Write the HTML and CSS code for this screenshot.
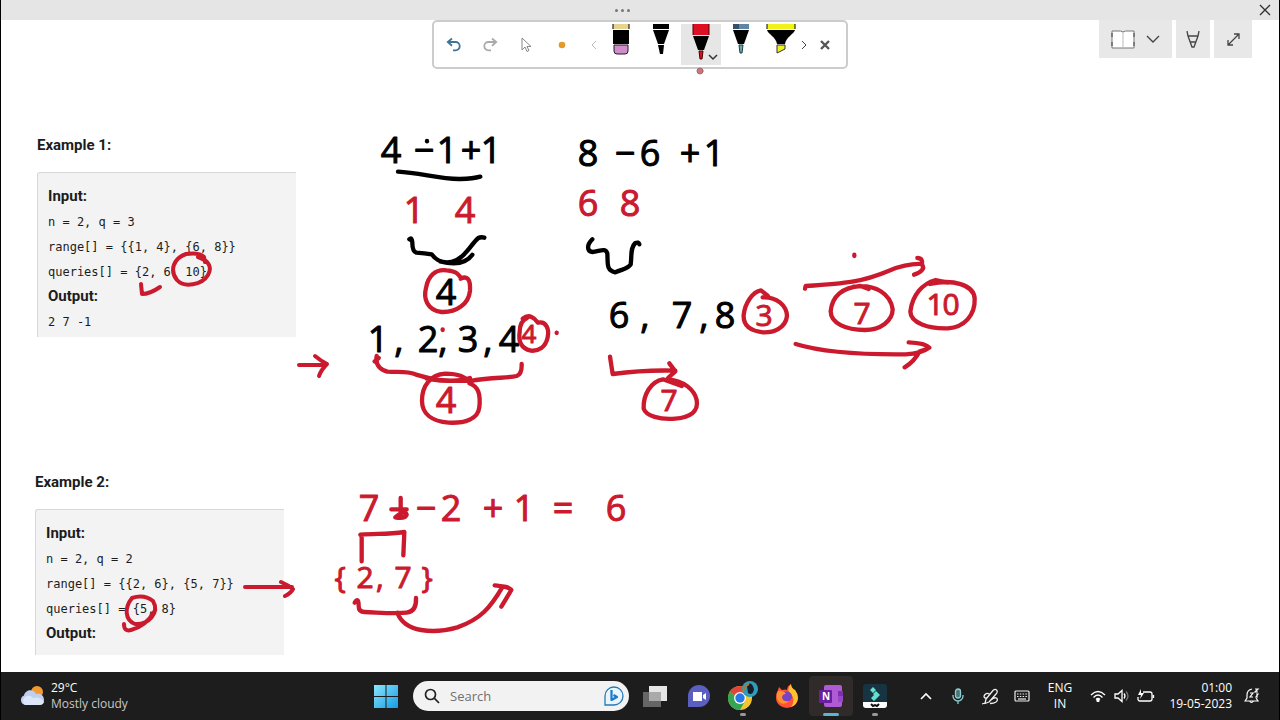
FILE: index.html
```html
<!DOCTYPE html>
<html lang="en">
<head>
<meta charset="utf-8">
<title>Range queries notes</title>
<link rel="stylesheet" href="styles.css">
</head>
<body>
<div class="page">
  <header class="titlebar">
    <span class="grip"><i></i><i></i><i></i></span>
    <button class="close" aria-label="Close window"><svg width="12" height="12" viewBox="0 0 12 12"><path d="M1 1l10 10M11 1L1 11" stroke="#333" stroke-width="1.4"/></svg></button>
  </header>

  <main class="canvas">
    <div class="tools">
      <div class="pens" role="toolbar" aria-label="Pens">
        <button class="tool" aria-label="Undo"><svg width="16" height="16" viewBox="0 0 16 16" fill="none" stroke="#3f7397" stroke-width="1.8"><path d="M6 1.500L1.800 5 6 8.700M2 5h7.500a4.200 4.200 0 0 1 0 8.400H7"/></svg></button>
        <button class="tool" aria-label="Redo"><svg width="16" height="16" viewBox="0 0 16 16" fill="none" stroke="#aaa" stroke-width="1.800"><path d="M10 1.500L14.200 5 10 8.700M14 5H6.500a4.200 4.200 0 0 0 0 8.400H9"/></svg></button>
        <button class="tool" aria-label="Select"><svg width="12" height="16" viewBox="0 0 12 16" fill="#fff" stroke="#888" stroke-width="1"><path d="M2 1v12l3-3 2 4.500 2-1L7 9.500h4z"/></svg></button>
        <button class="tool" aria-label="Laser pointer"><svg width="8" height="8" viewBox="0 0 8 8"><circle cx="4" cy="4" r="3.300" fill="#e39a2b"/></svg></button>
        <button class="tool previous" aria-label="Previous pens"><svg width="6" height="10" viewBox="0 0 6 10" fill="none" stroke="#bbb"><path d="M5 1L1 5l4 4"/></svg></button>
        <button class="pen" aria-label="Eraser"><svg width="18" height="32" viewBox="0 0 18 32"><path d="M1 0h16v5H1z" fill="#e5d48f"/><path d="M1 0v5M17 0v5" stroke="#000"/><path d="M1 6h16v14H1z"/><path d="M2 21h14v6q0 3-3 3H5q-3 0-3-3z" fill="#cf8dcc" stroke="#221a22"/></svg></button>
        <button class="pen" aria-label="Black pen"><svg width="18" height="32" viewBox="0 0 18 32"><path d="M1 0h16v5H1zM1 6h16l-5 14H6zM6 21h6l-1 9H8z"/></svg></button>
        <button class="pen active" aria-label="Red pen" aria-pressed="true"><svg width="18" height="38" viewBox="0 0 18 38"><path d="M1 0h16v11H1z" fill="#dc1022"/><path d="M1 0v11M17 0v11" stroke="#500"/><path d="M1 12h16l-5 14H6z"/><path d="M7 27h4l-1 8H8z" fill="#dc1022" stroke="#400"/></svg><svg class="more" width="10" height="7" viewBox="0 0 10 7" fill="none" stroke="#333" stroke-width="1.500"><path d="M1 1l4 4 4-4"/></svg></button>
        <button class="pen" aria-label="Galaxy pen"><svg width="18" height="32" viewBox="0 0 18 32"><path d="M1 0h16v5H1z" fill="#5f86a3"/><path d="M1 0h6v5H1z" fill="#36506c"/><path d="M1 6h16l-5 14H6z"/><path d="M7 21h4l-1 8H8z" fill="#65aeb0" stroke="#213d42"/></svg></button>
        <button class="pen" aria-label="Yellow highlighter"><svg width="30" height="32" viewBox="0 0 30 32"><path d="M1 0h28v5H1z" fill="#f1f21a"/><path d="M1 0v5M29 0v5" stroke="#000"/><path d="M1 6h28c-1 4-9 7-10 14h-8C10 13 2 10 1 6z"/><path d="M11 21h8v4l-8 4z" fill="#f1f21a" stroke="#333"/></svg></button>
        <button class="tool next" aria-label="More pens"><svg width="6" height="10" viewBox="0 0 6 10" fill="none" stroke="#444"><path d="M1 1l4 4-4 4"/></svg></button>
        <button class="tool" aria-label="Close pens"><svg width="10" height="10" viewBox="0 0 10 10" stroke="#555" stroke-width="2.400"><path d="M1 1l8 8M9 1L1 9"/></svg></button>
      </div>
      <div class="views">
        <button class="view book" aria-label="Page view"><svg width="24" height="19" viewBox="0 0 24 19" fill="#fff" stroke="#777"><path d="M1 1h8.500l2.500 1 2.500-1H23v17H1z"/><path d="M12 2v16" stroke="#bbb"/><path d="M1 3v13M23 3v13" stroke="#444" stroke-dasharray="4 5"/></svg><svg width="14" height="8" viewBox="0 0 14 8" fill="none" stroke="#444" stroke-width="1.400"><path d="M1 1l6 6 6-6"/></svg></button>
        <button class="view" aria-label="Draw"><svg width="14" height="17" viewBox="0 0 14 17" fill="none" stroke="#444" stroke-width="1.300"><path d="M1 0l1 5 4 11h2l4-11 1-5M2 5h10M4.500 11h5"/></svg></button>
        <button class="view expand" aria-label="Full screen"><svg width="13" height="13" viewBox="0 0 13 13" fill="none" stroke="#444" stroke-width="1.300"><path d="M1 12L12 1M7 1h5v5M1 7v5h5"/></svg></button>
      </div>
    </div>

    <section class="example first">
      <h2>Example 1:</h2>
      <div class="sample"><b>Input:</b><br>n = 2, q = 3<br>range[] = {{1, 4}, {6, 8}}<br>queries[] = {2, 6, 10}<br><b>Output:</b><br>2 7 -1</div>
    </section>
    <section class="example second">
      <h2>Example 2:</h2>
      <div class="sample"><b>Input:</b><br>n = 2, q = 2<br>range[] = {{2, 6}, {5, 7}}<br>queries[] = {5, 8}<br><b>Output:</b></div>
    </section>
  </main>

  <svg class="ink" width="1280" height="672" viewBox="0 0 1280 672">
    <g class="black">
      <text class="l" x="391 424 447 471 491" y="163">4−1+1</text>
      <text class="l" x="588 625 650 690 714" y="166">8−6+1</text>
      <text class="l" x="446" y="305">4</text>
      <text class="l" x="378 399 428 443 468 488 509" y="352">1,2,3,4</text>
      <text class="l" x="619 645 682 704 725" y="328">6,7,8</text>
    </g>
    <g class="red">
      <text class="l" x="414 465" y="223">14</text>
      <text class="l" x="588 630" y="216">68</text>
      <text class="s" x="529" y="343">4</text>
      <text class="l" x="446" y="413">4</text>
      <text class="m" x="669" y="411">7</text>
      <text class="m" x="764" y="326">3</text>
      <text class="m" x="862" y="324">7</text>
      <text class="m" x="935 951" y="315">10</text>
      <text class="l" x="369 426 451 493 524 563 616" y="521">7−2+1=6</text>
      <text class="m" x="340 365 380 403 427" y="588">{2,7}</text>
    </g>
    <!-- lines, brackets and rings round the first range -->
    <svg x="340" y="120" width="220" height="310" viewBox="0 0 660 930">
      <g class="black stroke">
        <path d="M174 155C240 158 300 178 360 177Q400 176 421 170"/>
        <path d="M208 358q8-8 9 10 0 26 12 30 26 2 46 5c16 22 40 26 58 23 40-8 60-54 82-72q8-4 18-1M300 424q70 18 97-20"/>
        <path d="M261 63v1"/>
      </g>
      <g class="red stroke">
        <path d="M362 476c20-10 30 2 28 36-4 40-40 66-86 64-44-6-54-42-46-72 6-36 28-58 62-53 32 2 36 14 44 24"/>
        <path d="M548 596c20-16 36-2 46 12 26-6 34 22 29 44-6 30-28 42-50 40-32-6-38-32-34-56 0-22 8-36 22-42"/>
        <path d="M110 708c-4 24 8 40 32 47 40 2 60-2 84 8 60 18 80 22 170 19 60-10 110-8 134-14q16-6 15-36M104 724l12-10"/>
        <path d="M388 790c28 10 34 34 30 72-4 36-44 48-92 46-52-4-80-28-80-66 0-46 26-78 70-81 40 0 60 10 78 28M260 776q80 14 130-2"/>
        <path d="M308 628v2M650 638v1"/>
      </g>
    </svg>
    <!-- brackets and arrow of the second range -->
    <svg x="560" y="120" width="200" height="310" viewBox="0 0 600 930">
      <path class="black stroke" d="M97 358c-18 18-16 36 0 38 22-2 40-14 45 4 2 32-4 50 24 57 22-10 38-10 46-24 4-26-2-50 14-64q10-4 12 4"/>
      <g class="red stroke">
        <path d="M150 710l8 52c60-8 120-12 188-10M328 730l18 24-22 20"/>
        <path d="M322 778c50 2 82 34 88 62 6 34-18 52-64 56-46 4-88-8-95-30-2-42 22-82 58-88l56 20"/>
      </g>
    </svg>
    <!-- rings and long arrows on the right -->
    <svg x="740" y="230" width="260" height="160" viewBox="0 0 780 480">
      <g class="red stroke">
        <path d="M68 202c44-2 72 26 73 56-4 36-40 50-72 49-34-4-60-18-58-52 4-38 28-70 52-74l20 16"/>
        <path d="M195 176l2-8c120-8 170-12 250-46q54-22 98-20M532 84q18 0 14 20c10 12-4 24-24 30"/>
        <path d="M340 170c68-10 112 24 118 68 0 34-36 62-84 62-56 0-102-20-102-56 4-46 36-72 90-76l24 9"/>
        <path d="M570 162c68-16 132 2 134 44 2 50-32 86-80 89-58 2-112-16-113-50 6-50 36-84 76-95l36 8"/>
        <path d="M167 342c90 28 230 32 330 31 36-2 54-8 70-20M506 337q50 2 62 16-12 6-30 12-14 28-44 47M343 74v4"/>
      </g>
    </svg>
    <!-- marks over the second example's working -->
    <svg x="320" y="470" width="330" height="180" viewBox="0 0 990 540">
      <g class="red stroke">
        <path d="M125 274V198l-4-4c50-4 80 0 132-8l-3 70"/>
        <path d="M104 398q12-18 12 10 0 18 18 18c50 2 90 6 126 2q30-4 28-44"/>
        <path d="M232 428c22 60 110 64 180 44 70-24 100-60 136-122M524 346c26 4 40 2 50 14l-30 50"/>
        <path d="M214 118h46M242 84v58M226 142q28-24 34-8-6 14-34 8z"/>
      </g>
    </svg>
    <g class="red thin">
      <path d="M141 284l1 10q8 0 18-7"/>
      <path d="M198 257c12 4 14 11 10 18-6 10-24 13-31 5-8-10-3-22 9-26q13-2 18 3l1 5"/>
      <path d="M299 365h24M315 356q6 5 12 8-6 6-8 12"/>
      <path d="M245 587h47M281 582q7 3 12 7-2 4-8 7"/>
      <path d="M132 598q12-4 21 3c7 12-5 24-18 23-10-4-11-16-3-26M124 624q0 8 7 6 15-4 23-18"/>
      <circle class="nib" cx="700" cy="71" r="3"/>
    </g>
  </svg>

  <footer class="taskbar">
    <div class="weather">
      <svg width="26" height="22" viewBox="0 0 26 22"><circle cx="18" cy="7" r="6" fill="#f29a30"/><path d="M6 20a5 5 0 0 1-1-9.500C6 5 14 3 17 9c5-1 8 2 8 6q0 5-5 5z" fill="#bfd0ef"/><path d="M6 20a5 5 0 0 1 0-8q5-3 8 1 7-2 11 4-1 3-5 3z" fill="#dbe6fa"/></svg>
      <div><div class="temp">29°C</div><div class="sky">Mostly cloudy</div></div>
    </div>
    <div class="apps">
      <button class="start" aria-label="Start"><svg width="24" height="24" viewBox="0 0 24 24"><defs><linearGradient id="win" x2="1" y2="1"><stop stop-color="#8be6fb"/><stop offset="1" stop-color="#149be5"/></linearGradient></defs><path d="M0 1h11.500v11H0zM12.500 1H24v11H12.500zM0 13h11.500v11H0zM12.500 13H24v11H12.500z" fill="url(#win)"/></svg></button>
      <label class="search">
        <svg width="16" height="16" viewBox="0 0 16 16" fill="none" stroke="#222" stroke-width="1.700"><circle cx="6.500" cy="6.500" r="5"/><path d="M10.200 10.200L15 15"/></svg>
        <input type="text" placeholder="Search" aria-label="Search">
        <svg width="22" height="22" viewBox="0 0 22 22" fill="none"><path d="M2 20V11a9 9 0 1 1 9 9z" fill="#e9f5fb" stroke="#2479b5" stroke-width="1.300"/><path d="M8.500 5v10l5.500-3-3.500-2" stroke="#1c78c8" stroke-width="2.200" stroke-linejoin="round"/></svg>
      </label>
      <button class="app" aria-label="Task view"><svg width="26" height="24" viewBox="0 0 26 24"><path d="M1 8h18v15H1z" fill="#666"/><path d="M7 2h18v15H7z" fill="#e6e6e6"/><path d="M7 8h12v9H7z" fill="#aaa"/></svg></button>
      <button class="app" aria-label="Chat"><svg width="24" height="24" viewBox="0 0 24 24"><path d="M1 23V12a11 11 0 1 1 11 11z" fill="#5a5fc0"/><path d="M6 8h9v9H6zM16 11l3-2v7l-3-2z" fill="#fff"/></svg></button>
      <button class="app running" aria-label="Chrome"><svg width="32" height="30" viewBox="0 0 32 30"><circle cx="13" cy="17" r="12" fill="#f4c52e"/><path d="M13 17L2.600 11A12 12 0 0 1 23.400 11z" fill="#df453b"/><path d="M13 17L2.600 11A12 12 0 0 0 13 29l5-9z" fill="#35a454"/><circle cx="13" cy="17" r="6" fill="#fff"/><circle cx="13" cy="17" r="4.700" fill="#2878e5"/><circle cx="23" cy="8" r="8" fill="#2e9dbb"/><path d="M20 5q4-6 7 3-1 7-6 4z" fill="#151e2c"/><path d="M15 11q4-7 7-8" stroke="#b2792e" stroke-width="2" fill="none"/></svg></button>
      <button class="app" aria-label="Firefox"><svg width="24" height="24" viewBox="0 0 24 24"><path d="M3 6l1-3 3 3q3-1 5 0 0-4 4-6 0 4 4 6 3 4 3 8a11 10 0 0 1-22 0Q1 9 3 6z" fill="#ff5134"/><path d="M16 0q0 4 4 6 3 4 3 8-1 7-7 9 5-7 0-13-5-4 0-10z" fill="#ffc32e"/><circle cx="12" cy="12.500" r="5" fill="#7844c5"/><path d="M3 7q5-1 8 3-4 0-4 4 1 4 7 3-5 5-10 1-4-5-1-11z" fill="#ff9230"/></svg></button>
      <button class="app current" aria-label="OneNote"><svg width="26" height="24" viewBox="0 0 26 24"><rect x="6" y="1" width="18" height="22" rx="2" fill="#b05bd6"/><path d="M20 7h5v5h-5z" fill="#7c2fae"/><path d="M20 12h5v6h-5z" fill="#9a44c8"/><rect x="1" y="6" width="13" height="13" rx="1" fill="#6b1fa0"/><text class="badge" x="4" y="16">N</text></svg></button>
      <button class="app running" aria-label="Filmora"><svg width="24" height="24" viewBox="0 0 24 24"><rect width="24" height="24" rx="3" fill="#163442"/><path d="M7 6l3-3 3 3-3 3zM10 10l3-3 4 4-6 6-3-3 3-3z" fill="#65e0cd"/><path d="M0 18h24v3q0 3-3 3H3q-3 0-3-3z" fill="#fff"/><path d="M8 20l2 2 2-1 2 1 2-2" stroke="#111" stroke-width="2" fill="none"/></svg></button>
    </div>
    <div class="tray">
      <button class="cell" aria-label="Hidden icons"><svg width="12" height="8" viewBox="0 0 12 8" fill="none" stroke="#fff" stroke-width="1.600"><path d="M1 7l5-5 5 5"/></svg></button>
      <button class="cell" aria-label="Microphone"><svg width="12" height="16" viewBox="0 0 12 16" fill="none" stroke="#8ccfd2" stroke-width="1.300"><rect x="3.500" y="1" width="5" height="9" rx="2.500" fill="#4d7476"/><path d="M1 7v1a5 5 0 0 0 10 0V7M6 13v3"/></svg></button>
      <button class="cell" aria-label="Pen menu"><svg width="18" height="17" viewBox="0 0 18 17" fill="none" stroke="#eee" stroke-width="1.300" stroke-linejoin="round"><path d="M5 11l7-8.500q2-2 3.500-.5 1.500 1.500 0 3.500L8 14l-4 1.500zM5.500 10.500Q1.500 9.500 4 6.500q2-2 4.500-.5M10 12q3-3 5.500-2 2 2-.5 4-2 1.500-6 1.500M1 16l3-1"/></svg></button>
      <button class="cell" aria-label="Touch keyboard"><svg width="16" height="12" viewBox="0 0 16 12" fill="none" stroke="#eee" stroke-width="1.200"><rect x="1" y="1" width="14" height="10" rx="1"/><path d="M3 4h10M3 6.500h10" stroke-dasharray="1.500 1.300"/><path d="M4 9h8"/></svg></button>
      <button class="lang">ENG<br>IN</button>
      <button class="status" aria-label="Wi-Fi"><svg width="16" height="12" viewBox="0 0 16 12" fill="none" stroke="#fff" stroke-width="1.300"><path d="M1 5q7-7 14 0M3.500 7.500q4.500-5 9 0M6 9.500q2-2 4 0"/><circle cx="8" cy="10.500" r="1" fill="#fff"/></svg></button>
      <button class="status" aria-label="Volume"><svg width="16" height="14" viewBox="0 0 16 14" fill="none" stroke="#fff" stroke-width="1.300"><path d="M1 5h3l4-3.500v11L4 9H1zM10 4.500q2 2.500 0 5"/><path d="M12 2.500q4 4.500 0 9" stroke="#777"/></svg></button>
      <button class="status" aria-label="Battery"><svg width="18" height="14" viewBox="0 0 18 14" fill="none" stroke="#fff" stroke-width="1.300"><path d="M6 3h7q2 0 2 2v5q0 2-2 2H3q-2 0-2-2V8M16.500 6v3"/><path d="M4 0L1 6h3L3 10l4-6H4z" fill="#fff" stroke="none"/></svg></button>
      <div class="clock">01:00<br>19-05-2023</div>
      <button class="bell" aria-label="Notifications"><svg width="16" height="16" viewBox="0 0 16 16" fill="none" stroke="#fff" stroke-width="1.200"><path d="M8 1Q3 2 3 7v3l-2 3h13l-2-3M5.500 13q2 3 4 0M6 5h3l-3 4h3M11 1h3l-3 3h3M12 6h2l-2 3h2"/></svg></button>
    </div>
  </footer>
</div>
</body>
</html>
```
FILE: styles.css
```css
* { box-sizing: border-box; }
body { margin: 0; background: #000; font-family: Roboto, sans-serif; }
button { border: 0; padding: 0; margin: 0; background: none; color: inherit; font: inherit; display: flex; align-items: center; justify-content: center; }
svg { display: block; }

.page { position: relative; min-height: 100vh; display: flex; flex-direction: column; background: #fff; border: solid #000; border-width: 0 1px; overflow: hidden; }
.titlebar { height: 20px; background: #e5e5e5; display: grid; grid-template-columns: 1fr auto 1fr; align-items: center; }
.grip { grid-column: 2; display: flex; gap: 3px; margin-right: 36px; }
.grip i { width: 3px; height: 3px; border-radius: 50%; background: #777; }
.close { justify-self: end; margin-right: 8px; }

.canvas { flex: 1; }
.tools { display: grid; grid-template-columns: 1fr auto 1fr; align-items: start; height: 50px; }
.pens { grid-column: 2; display: flex; align-items: center; height: 49px; padding: 0 3px 0 2px; border: 2px solid #ccc; border-radius: 5px; background: #fff; }
.tool { width: 36px; height: 41px; }
.previous { width: 14px; margin-left: 7px; }
.next { width: 6px; }
.pen { position: relative; width: 40px; height: 41px; align-items: flex-start; }
.active { background: #e6e6e6; }
.more { position: absolute; right: 3px; bottom: 4px; }
.views { justify-self: end; display: flex; gap: 4px; margin-right: 27px; }
.view { width: 34px; height: 38px; background: #e8e8e8; }
.book { width: 73px; gap: 11px; }
.expand { width: 38px; }

.example { color: #1c1c1c; }
.example h2 { margin: 0; font-size: 15px; line-height: 25px; font-weight: 700; }
.sample { margin-top: 14px; padding: 12px 10px; background: #f3f3f3; border: solid #d8d8d8; border-width: 1px 0 0 1px; border-radius: 3px 0 0 0; font-family: "DejaVu Sans Mono", monospace; font-size: 12px; line-height: 25px; }
.sample b { font-family: Roboto, sans-serif; font-size: 15px; line-height: 1; }
.first { width: 259px; margin: 63px 0 0 36px; }
.first .sample { padding-bottom: 2px; }
.second { width: 249px; margin: 133px 0 17px 34px; }
.second .sample { padding-bottom: 8px; }

/* Handwriting layer, free over the notes */
.ink { position: absolute; left: -1px; top: 0; pointer-events: none; }
.ink text { font-family: "Open Sans", sans-serif; text-anchor: middle; stroke-width: 1px; stroke-linejoin: round; }
.ink .l { font-size: 36px; }
.ink .m { font-size: 30px; }
.ink .s { font-size: 26px; }
.black text { fill: #000; stroke: #000; }
.red text { fill: #cb1a2e; stroke: #cb1a2e; }
.stroke, .thin { fill: none; stroke-linecap: round; stroke-linejoin: round; }
.stroke { stroke-width: 13px; }
.black.stroke { stroke: #000; }
.red.stroke, .thin { stroke: #cb1a2e; }
.thin { stroke-width: 4px; }
.nib { fill: #c77880; stroke: #a66; stroke-width: 1px; }

.taskbar { height: 48px; background: #1d1d1d; color: #fff; display: grid; grid-template-columns: 1fr auto 1fr; align-items: center; font-family: "Open Sans", sans-serif; font-size: 12px; line-height: 16px; }
.weather { display: flex; align-items: center; gap: 6px; padding-left: 18px; }
.sky { color: #c8c8c8; }
.apps { display: flex; align-items: center; padding-right: 9px; }
.search { display: flex; align-items: center; gap: 10px; width: 216px; height: 30px; margin: 0 4px 0 15px; padding: 0 4px 0 11px; border-radius: 15px; background: #f2f2f2; }
.search input { flex: 1; min-width: 0; border: 0; outline: 0; padding: 0; background: none; font: 13px "Open Sans", sans-serif; }
.search input::placeholder { color: #707070; }
.app { position: relative; width: 44px; height: 40px; }
.current { background: #302a29; border-radius: 4px; }
.running::after, .current::after { content: ""; position: absolute; bottom: 0; left: 19px; width: 6px; height: 3px; border-radius: 2px; background: #999; }
.current::after { left: 14px; width: 16px; background: #5bb5d8; }
.badge { font: bold 10px "Open Sans", sans-serif; fill: #fff; }
.tray { display: flex; align-items: center; justify-content: flex-end; padding-right: 17px; }
.cell { width: 32px; height: 40px; }
.lang { width: 44px; margin-right: 4px; text-align: center; }
.status { width: 24px; height: 40px; }
.clock { width: 74px; text-align: right; white-space: nowrap; }
.bell { width: 20px; height: 40px; margin-left: 10px; }
```
